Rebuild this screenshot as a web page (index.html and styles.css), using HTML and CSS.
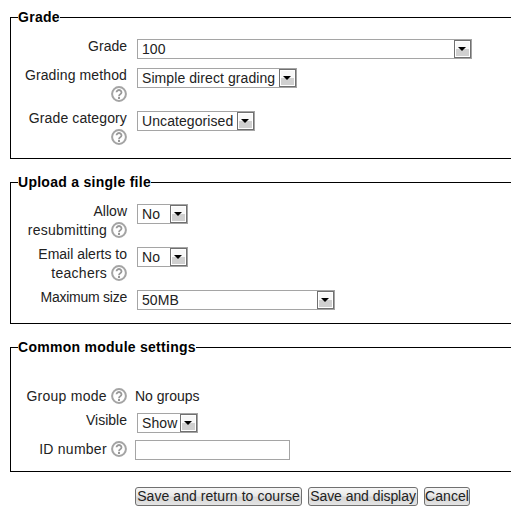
FILE: index.html
```html
<!DOCTYPE html>
<html lang="en">
<head>
    <meta charset="UTF-8">
    <title>Assignment settings</title>
    <link rel="stylesheet" href="styles.css">
</head>
<body>
    <!-- Help icon, reused by every label -->
    <svg class="iconDefs" width="0" height="0">
        <symbol id="help" viewBox="0 0 16 16">
            <circle cx="8" cy="8" r="6.9" fill="#fff" stroke="#a4a4a4" stroke-width="2"/>
            <path d="M5.5 6.3a2.5 2.3 0 1 1 3.8 2C8.3 8.9 8 9.2 8 10.2" fill="none" stroke="#989898" stroke-width="1.8"/>
            <rect x="7" y="11" width="2" height="2" fill="#989898"/>
        </symbol>
    </svg>

    <form class="settings">
        <fieldset class="group">
            <legend class="groupTitle">Grade</legend>
            <div class="row">
                <div class="label">Grade</div>
                <div class="control">
                    <div class="select sizeGrade"><span class="selectText">100</span><span class="arrow"></span></div>
                </div>
            </div>
            <div class="row">
                <div class="label labelWide">Grading method <svg class="help"><use href="#help"/></svg></div>
                <div class="control">
                    <div class="select sizeMethod"><span class="selectText">Simple direct grading</span><span class="arrow"></span></div>
                </div>
            </div>
            <div class="row">
                <div class="label labelWide">Grade category <svg class="help"><use href="#help"/></svg></div>
                <div class="control">
                    <div class="select sizeCategory"><span class="selectText">Uncategorised</span><span class="arrow"></span></div>
                </div>
            </div>
        </fieldset>

        <fieldset class="group">
            <legend class="groupTitle">Upload a single file</legend>
            <div class="row">
                <div class="label">Allow<br><span class="labelWider">resubmitting</span> <svg class="help"><use href="#help"/></svg></div>
                <div class="control">
                    <div class="select sizeNo"><span class="selectText">No</span><span class="arrow"></span></div>
                </div>
            </div>
            <div class="row">
                <div class="label">Email alerts to<br><span class="labelWider">teachers</span> <svg class="help"><use href="#help"/></svg></div>
                <div class="control">
                    <div class="select sizeNo"><span class="selectText">No</span><span class="arrow"></span></div>
                </div>
            </div>
            <div class="row">
                <div class="label labelNarrow">Maximum size</div>
                <div class="control">
                    <div class="select sizeMax"><span class="selectText">50MB</span><span class="arrow"></span></div>
                </div>
            </div>
        </fieldset>

        <fieldset class="group groupLast">
            <legend class="groupTitle">Common module settings</legend>
            <div class="row">
                <div class="label labelWider">Group mode <svg class="help"><use href="#help"/></svg></div>
                <div class="staticText">No groups</div>
            </div>
            <div class="row rowTight">
                <div class="label">Visible</div>
                <div class="control">
                    <div class="select sizeShow"><span class="selectText">Show</span><span class="arrow"></span></div>
                </div>
            </div>
            <div class="row rowTight">
                <div class="label labelWider labelLevel">ID number <svg class="help"><use href="#help"/></svg></div>
                <div class="control">
                    <input type="text" class="textField">
                </div>
            </div>
        </fieldset>

        <div class="buttons">
            <button type="button" class="button buttonReturn">Save and return to course</button>
            <button type="button" class="button buttonDisplay">Save and display</button>
            <button type="button" class="button buttonCancel">Cancel</button>
        </div>
    </form>
</body>
</html>
```

FILE: styles.css
```css
html, body {
    margin: 0;
    height: 100%;
    overflow: hidden;
    background-color: #ffffff;
}

body {
    font-family: "Liberation Sans", Arial, sans-serif;
    font-size: 14px;
    line-height: 19px;
    color: #222222;
}

.iconDefs {
    position: absolute;
}

.settings {
    box-sizing: border-box;
    width: 511px;
    padding: 8px 0 0 10px;
}

.group {
    margin: 0 0 14px;
    padding: 12px 0 4px;
    border: 1px solid #000000;
    border-right: none;
    min-width: 0;
}

.groupLast {
    padding-top: 32px;
}

.groupTitle {
    margin-left: 7px;
    padding: 0;
    font-weight: bold;
    letter-spacing: 0.27px;
    color: #000000;
}

.row {
    display: flex;
    padding-bottom: 7px;
}

.rowTight {
    padding-bottom: 5px;
}

.label {
    width: 116px;
    margin-top: -2px;
    text-align: right;
    flex-shrink: 0;
}

.labelWide {
    letter-spacing: 0.12px;
}

.labelWider {
    letter-spacing: 0.26px;
}

.labelNarrow {
    letter-spacing: -0.25px;
}

.labelLevel {
    margin-top: 0;
}

.help {
    width: 16px;
    height: 16px;
    vertical-align: -3px;
}

.control {
    margin-left: 8px;
    padding-bottom: 2px;
}

.staticText {
    margin: -2px 0 0 8px;
}

.select {
    display: flex;
    align-items: center;
    justify-content: space-between;
    box-sizing: border-box;
    height: 20px;
    margin-left: 2px;
    border: 1px solid #a5a5a5;
    background-color: #ffffff;
}

.selectText {
    padding-left: 4px;
    letter-spacing: 0.08px;
}

.sizeGrade { width: 335px; }
.sizeMethod { width: 160px; }
.sizeCategory { width: 118px; }
.sizeNo { width: 51px; }
.sizeMax { width: 198px; }
.sizeShow { width: 61px; }

.arrow {
    position: relative;
    box-sizing: border-box;
    width: 17px;
    height: 18px;
    border: 1px solid #707070;
    box-shadow: inset 0 0 0 1px #ffffff;
    background: linear-gradient(#f8f8f8 50%, #d0d0d0 50%);
}

.arrow::after {
    content: "";
    position: absolute;
    left: 3px;
    top: 6px;
    border-style: solid;
    border-width: 4px 4px 0;
    border-color: #000000 transparent transparent;
}

.textField {
    display: block;
    box-sizing: border-box;
    width: 155px;
    height: 20px;
    margin: 0;
    padding: 0 3px;
    border: 1px solid #a5a5a5;
    border-radius: 0;
    outline: none;
    font: inherit;
}

.buttons {
    display: flex;
    gap: 6px;
    margin: 15px 0 0 125px;
}

.button {
    box-sizing: border-box;
    height: 19px;
    padding: 0 0 2px;
    border: 1px solid #707070;
    border-radius: 3px;
    background: linear-gradient(#f6f6f6 0%, #e8e8e8 45%, #d6d6d6 55%, #e4e4e4 100%);
    font: inherit;
    line-height: 16px;
    letter-spacing: 0.06px;
    color: #222222;
}

.buttonReturn { width: 167px; }
.buttonDisplay { width: 110px; letter-spacing: -0.06px; }
.buttonCancel { width: 46px; }
```
